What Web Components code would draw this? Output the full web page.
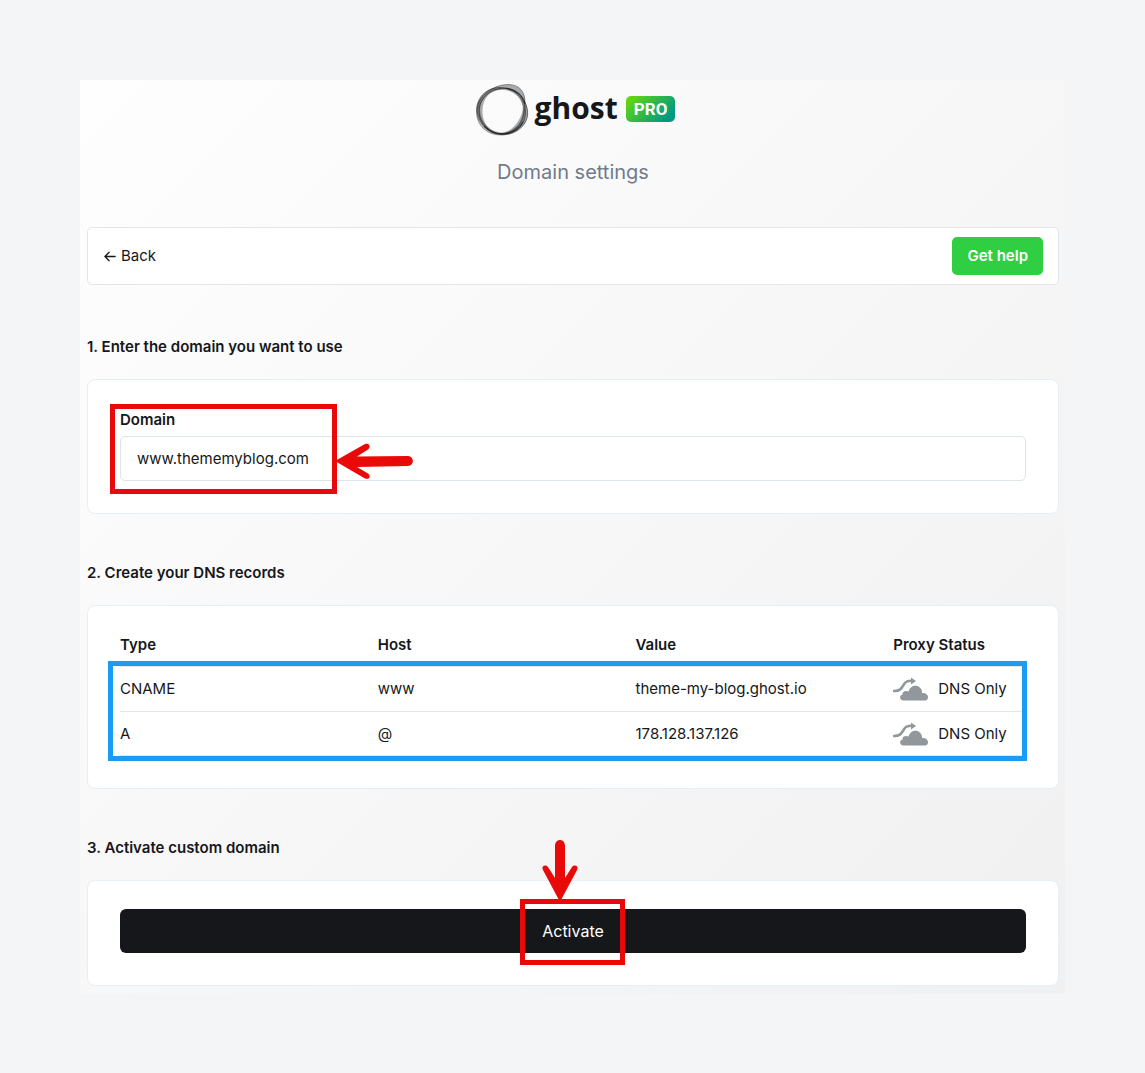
<!DOCTYPE html>
<html lang="en">
<head>
<meta charset="utf-8">
<title>Domain settings</title>
<style>
  :root {
    --ink: #15171a;
    --line: #dde4ea;
    --card-line: #e5eff5;
    --green: #30cf43;
    --red: #ea0909;
    --blue: #1a9cf5;
  }

  body {
    margin: 0;
    background: #f3f5f7;
    color: var(--ink);
    font-family: Inter, "Liberation Sans", sans-serif;
    font-size: 15px;
    line-height: 24px;
  }
</style>
</head>
<body>
<domain-settings></domain-settings>

<script>
function defineElement(name, html, setup) {
  const template = document.createElement("template");
  template.innerHTML = html;

  customElements.define(name, class extends HTMLElement {
    constructor() {
      super();
      this.attachShadow({ mode: "open" }).appendChild(template.content.cloneNode(true));
    }

    connectedCallback() {
      if (setup) setup(this);
    }
  });
}

defineElement("ghost-logo", `
  <style>
    :host {
      display: flex;
      justify-content: center;
      align-items: center;
      height: 60px;
      padding-left: 4px;
    }

    svg {
      width: 54px;
      height: 54px;
      flex: none;
    }

    .name {
      margin: 0 8px 4px 6px;
      font: 700 30px/40px "Open Sans", sans-serif;
    }

    .badge {
      margin-bottom: 2px;
      padding: 0 8px;
      border-radius: 5px;
      background: linear-gradient(135deg, #67d80a 5%, #009a83 85%);
      color: #fff;
      font: 700 17px/26px Roboto, sans-serif;
    }
  </style>

  <svg viewBox="0 0 54 54" fill="none" stroke="#15171a" aria-hidden="true">
    <g fill="#15171a" stroke="none" fill-rule="evenodd">
      <path fill-opacity=".35" d="M1.500 28C1.500 14 11 5 24 4.500C39 4 49 15 50.500 28C50 43 40 52 26 52C12 51 2 42 1.500 28ZM7.500 27C7 40 15 50 27 50C40 50 48 40 48 27C48 15 38 7 27 7C15 7 8 15 7.500 27Z"/>
      <path fill-opacity=".35" d="M3 20C8 10 20 1.500 33 1.500C44 2 50 8 50 19C50 36 42 50 28 51C12 51-1 36 3 20ZM5 26C5 39 15 49.500 28 49.500C39 48 48 34 48 23C46 13 38 6 27 6C15 7 6 14 5 26Z"/>
      <path fill-opacity=".4" d="M48 16C54 23 54 33 50 40C45 48 34 52 24 51C34 50 43 45 47 36C50 29 51 21 48 16Z"/>
    </g>
    <g stroke-width=".8">
      <path stroke-opacity=".6" d="M1.500 29C1 15 11 5 24 4.500C38 4 50 14 50.500 28C51 43 40 52 26 52C12 52 2 43 1.500 29Z"/>
      <path stroke-opacity=".55" d="M3 22C7 9 22 1 34 1.500C45 2 50 9 50 20C50 36 42 50 28 51C12 52-1 36 3 22Z"/>
      <path stroke-opacity=".65" d="M5 22C9 10 22 3 34 6C46 9 54 22 52.500 33C50 46 37 53 25 51C10 49 1 34 5 22Z"/>
    </g>
    <path stroke-opacity=".7" stroke-width="1.200" d="M9 43C20 55 40 53 48 39M31 5C41 7 48 13 50 21"/>
  </svg>
  <span class="name">ghost</span>
  <span class="badge">PRO</span>
`);

defineElement("help-bar", `
  <style>
    :host {
      display: flex;
      justify-content: space-between;
      align-items: center;
      height: 58px;
      padding: 0 15px 0 16px;
      box-sizing: border-box;
      border: 1px solid #e2e5e9;
      border-radius: 5px;
      background: #fff;
    }

    a {
      display: flex;
      align-items: center;
      gap: 4px;
      color: inherit;
      text-decoration: none;
    }

    svg {
      width: 13px;
      height: 13px;
    }

    button {
      height: 38px;
      padding: 0 15px;
      border: 0;
      border-radius: 5px;
      background: var(--green);
      color: #fff;
      font: inherit;
      font-weight: 600;
      cursor: pointer;
    }
  </style>

  <a href="#back">
    <svg viewBox="0 0 14 14" fill="none" stroke="currentColor" stroke-width="1.400" stroke-linecap="round" stroke-linejoin="round" aria-hidden="true">
      <path d="M12 7H1M5.500 2.500L1 7l4.500 4.500"/>
    </svg>
    Back
  </a>
  <button type="button">Get help</button>
`);

defineElement("setup-step", `
  <style>
    :host {
      display: block;
    }

    h2 {
      margin: 0 0 20px;
      font-size: 15px;
      font-weight: 600;
    }

    .card {
      padding: 28px 32px 32px;
      border: 1px solid var(--card-line);
      border-radius: 8px;
      background: #fff;
    }
  </style>

  <h2></h2>
  <div class="card"><slot></slot></div>
`, (el) => {
  el.shadowRoot.querySelector("h2").textContent = el.getAttribute("heading");
});

// Hand-drawn arrow, pointing left by default
defineElement("red-arrow", `
  <style>
    :host {
      display: block;
      width: 78px;
      height: 36px;
    }

    svg {
      display: block;
      width: 100%;
      height: 100%;
    }

    .down,
    :host([down]) .left {
      display: none;
    }

    :host([down]) {
      width: 36px;
      height: 62px;
    }

    :host([down]) .down {
      display: block;
    }
  </style>

  <svg class="left" viewBox="0 0 78 36" fill="#ea0909" aria-hidden="true">
    <path d="M0 18L30 1C34-.5 36.500 3.500 33 6.500L22 13.500L73 13C79.500 13.500 79.500 22.500 73 23L22 24L33 30.500C36.500 33.500 34 37 30 35.500Z"/>
  </svg>
  <svg class="down" viewBox="0 0 36 62" fill="#ea0909" aria-hidden="true">
    <path d="M18 62L1 30C-1 26 3 24 6 27L13 38V6C13-2 23-2 23 6V38L30 27C33 24 37 26 35 30Z"/>
  </svg>
`);

defineElement("domain-field", `
  <style>
    :host {
      display: block;
      position: relative;
    }

    label {
      display: block;
      margin-bottom: 4px;
      font-weight: 600;
    }

    input {
      display: block;
      width: 100%;
      height: 45px;
      padding: 0 16px;
      box-sizing: border-box;
      border: 1px solid var(--line);
      border-radius: 5px;
      background: #fff;
      color: inherit;
      font: inherit;
    }

    .mark {
      position: absolute;
      top: -4px;
      left: -10px;
      width: 227px;
      height: 90px;
      box-sizing: border-box;
      border: 5px solid var(--red);
      pointer-events: none;
    }

    red-arrow {
      position: absolute;
      top: 35px;
      left: 215px;
    }
  </style>

  <label for="domain">Domain</label>
  <input id="domain" type="text" value="www.thememyblog.com">
  <div class="mark"></div>
  <red-arrow></red-arrow>
`);

defineElement("proxy-status", `
  <style>
    :host {
      display: flex;
      align-items: center;
      gap: 10px;
    }

    svg {
      width: 35px;
      height: 24px;
    }
  </style>

  <svg viewBox="0 0 35 24" fill="#92979b" aria-hidden="true">
    <path d="M1 14C7 14 8 12 10.500 8C12.500 4.500 14 3.800 19 3.800" fill="none" stroke="#92979b" stroke-width="2.600" stroke-linecap="round"/>
    <path d="M18 .5L23 4L18 7.500Z"/>
    <path d="M10.500 23.500C6.500 23.500 6 18.500 9.500 17.500C9 14.500 12.500 13 15.500 14.500C17 9.500 21 8 24.500 9C27.500 10.500 29.500 13 29 16C32 15.500 35 17.500 35 20C35 22 34 23.500 32 23.500Z"/>
  </svg>
  <slot></slot>
`);

defineElement("dns-records", `
  <style>
    :host {
      display: block;
      position: relative;
    }

    table {
      width: 100%;
      table-layout: fixed;
      border-spacing: 0;
    }

    col {
      width: 28.45%;
    }

    col:last-child {
      width: auto;
    }

    th,
    td {
      padding: 0;
      border-bottom: 1px solid #e3e6e8;
      text-align: left;
      white-space: nowrap;
    }

    th {
      padding-bottom: 10px;
      font-weight: 600;
      line-height: 22px;
    }

    td {
      height: 44px;
    }

    tr:last-child td {
      height: 43px;
    }

    .mark {
      position: absolute;
      top: 27px;
      right: -1px;
      bottom: -5px;
      left: -12px;
      border: 5px solid var(--blue);
      pointer-events: none;
    }
  </style>

  <table>
    <colgroup><col><col><col><col></colgroup>
    <thead>
      <tr><th>Type</th><th>Host</th><th>Value</th><th>Proxy Status</th></tr>
    </thead>
    <tbody></tbody>
  </table>
  <div class="mark"></div>
`, (el) => {
  const records = [
    ["CNAME", "www", "theme-my-blog.ghost.io"],
    ["A", "@", "178.128.137.126"]
  ];

  el.shadowRoot.querySelector("tbody").innerHTML = records.map((record) => `
    <tr>
      ${record.map((text) => `<td>${text}</td>`).join("")}
      <td><proxy-status>DNS Only</proxy-status></td>
    </tr>
  `).join("");
});

defineElement("activate-button", `
  <style>
    :host {
      display: block;
      position: relative;
    }

    button {
      display: block;
      width: 100%;
      height: 44px;
      border: 0;
      border-radius: 6px;
      background: var(--ink);
      color: #fff;
      font: inherit;
      font-size: 16px;
      cursor: pointer;
    }

    .mark {
      position: absolute;
      top: -10px;
      left: calc(50% - 53px);
      width: 105px;
      height: 66px;
      box-sizing: border-box;
      border: 5px solid var(--red);
      pointer-events: none;
    }

    red-arrow {
      position: absolute;
      top: -69px;
      left: calc(50% - 31px);
    }
  </style>

  <button type="button"><slot></slot></button>
  <div class="mark"></div>
  <red-arrow down></red-arrow>
`);

defineElement("domain-settings", `
  <style>
    :host {
      display: block;
      padding: 80px;
    }

    main {
      padding: 0 6px 8px 7px;
      background: linear-gradient(135deg, #fefefe, #f0f0f0);
    }

    h1 {
      margin: 16px 0 39px;
      color: #717b8b;
      font-size: 20px;
      font-weight: 400;
      line-height: 32px;
      text-align: center;
    }

    help-bar {
      margin-bottom: 50px;
    }

    .steps {
      display: flex;
      flex-direction: column;
      gap: 47px;
    }
  </style>

  <main>
    <ghost-logo></ghost-logo>
    <h1>Domain settings</h1>
    <help-bar></help-bar>
    <div class="steps">
      <setup-step heading="1. Enter the domain you want to use">
        <domain-field></domain-field>
      </setup-step>
      <setup-step heading="2. Create your DNS records">
        <dns-records></dns-records>
      </setup-step>
      <setup-step heading="3. Activate custom domain">
        <activate-button>Activate</activate-button>
      </setup-step>
    </div>
  </main>
`);
</script>
</body>
</html>
